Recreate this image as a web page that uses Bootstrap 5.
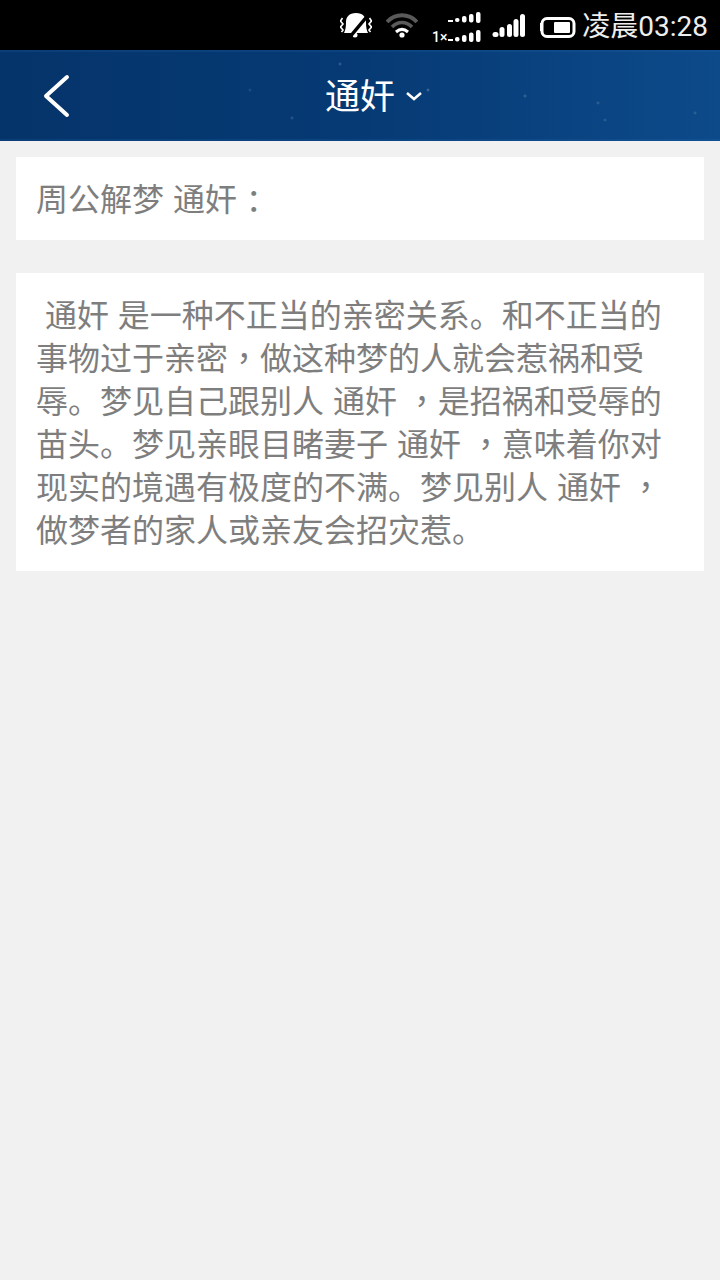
<!DOCTYPE html>
<html lang="zh-CN">
<head>
  <meta charset="UTF-8" />
  <title>通奸</title>
  <meta name="viewport" content="width=device-width, initial-scale=1" />
  <link href="https://cdn.jsdelivr.net/npm/bootstrap@5.3.0/dist/css/bootstrap.min.css" rel="stylesheet" />
  <style>
    body, html {
      margin: 0;
      padding: 0;
      height: 100%;
    }

    body {
      background-color: #f1f1f1;
      font-family: "Liberation Sans", "Noto Sans CJK SC", sans-serif;
    }

    /* Status bar */
    .status-bar {
      height: 50px;
      background-color: #000;
      padding-right: 12px;
    }

    .status-bar svg {
      flex: none;
    }

    .gap-mute { margin-right: 14px; }
    .gap-wifi { margin-right: 14px; }
    .gap-sim { margin-right: 10px; }
    .gap-signal { margin-right: 12px; }

    .status-time {
      color: #eee;
      font-family: Roboto, "Noto Sans CJK SC", sans-serif;
      font-size: 28px;
      line-height: 50px;
      padding-top: 3px;
      margin-left: 6px;
      white-space: nowrap;
    }

    /* Header */
    .title-bar {
      height: 91px;
      padding: 2px 0 0 28px;
      background-color: #0a3a70;
      background-image:
        radial-gradient(circle at 340px 14px, rgba(255,255,255,.25) 0, transparent 2px),
        radial-gradient(circle at 250px 40px, rgba(255,255,255,.15) 0, transparent 2px),
        radial-gradient(circle at 292px 68px, rgba(255,255,255,.2) 0, transparent 2px),
        radial-gradient(circle at 428px 40px, rgba(255,255,255,.3) 0, transparent 2px),
        radial-gradient(circle at 525px 46px, rgba(255,255,255,.25) 0, transparent 2px),
        radial-gradient(circle at 598px 53px, rgba(255,255,255,.2) 0, transparent 2px),
        radial-gradient(circle at 605px 70px, rgba(255,255,255,.18) 0, transparent 2px),
        radial-gradient(circle at 695px 63px, rgba(255,255,255,.18) 0, transparent 2px),
        linear-gradient(90deg, #05346a 0%, #063a74 50%, #0d4a8a 100%);
      box-shadow: inset 0 2px 0 rgba(40,110,190,.18), inset 0 -2px 0 rgba(40,110,190,.18);
    }

    .back-btn {
      position: absolute;
      left: 42px;
      top: 24px;
      line-height: 0;
    }

    .title-text {
      color: #fff;
      font-size: 35px;
      line-height: 50px;
    }

    .title-caret {
      margin-left: 10px;
    }

    /* Content */
    .dream-panel {
      background-color: #fff;
      color: #7e7e7e;
      font-size: 32px;
      padding: 0 20px;
      margin: 0 16px;
    }

    .dream-head {
      height: 83px;
      line-height: 86px;
      margin-top: 16px;
      margin-bottom: 33px;
    }

    .dream-body {
      height: 298px;
      padding-top: 22px;
      line-height: 43px;
    }

    /* centred commas, as the phone's fallback font draws them */
    .mid-punct {
      display: inline-block;
      font-family: "Noto Sans CJK TC", sans-serif;
      line-height: 32px;
    }
  </style>
</head>
<body>

  <!-- Status bar -->
  <div class="status-bar d-flex align-items-center justify-content-end">
    <svg class="gap-mute" width="32" height="26" viewBox="0 0 32 26">
      <path d="M16 1C9 1 6 5 6 10 6 15 5.500 18 4 21H28C26.500 18 26 15 26 10 26 5 23 1 16 1Z" fill="#fff"/>
      <circle cx="15" cy="23" r="2.500" fill="#fff"/>
      <path d="M29 2L9 26" stroke="#000" stroke-width="3.500"/>
      <path d="M2.500 6L.5 9 3 12 .5 15 3 18 1.500 20M29.500 6l2 3-2.500 3 2.500 3-2.500 3 1.500 2" stroke="#fff" stroke-width="1.600" fill="none"/>
    </svg>
    <svg class="gap-wifi" width="32" height="26" viewBox="0 0 32 26">
      <path d="M1 10C9 1 23 1 31 10" stroke="#5a5a5a" stroke-width="4" fill="none"/>
      <path d="M6 15C12 9 20 9 26 15" stroke="#5a5a5a" stroke-width="3.500" fill="none"/>
      <path d="M10 20C14 16.500 18 16.500 22 20" stroke="#fff" stroke-width="3" fill="none"/>
      <circle cx="16" cy="23" r="2.600" fill="#fff"/>
    </svg>
    <svg class="gap-sim" width="50" height="40" viewBox="0 0 50 40">
      <g fill="#fff">
        <rect x="16" y="15" width="5" height="2"/><rect x="23" y="13" width="4.500" height="4" rx="2"/>
        <rect x="30" y="11" width="4.500" height="6.500" rx="2"/><rect x="37" y="9" width="4.500" height="8.500" rx="2"/>
        <rect x="44" y="7" width="4.500" height="11" rx="2"/>
        <rect x="16" y="34" width="5" height="2"/><rect x="23" y="32" width="4.500" height="4.500" rx="2"/>
        <rect x="30" y="30" width="4.500" height="7" rx="2"/><rect x="37" y="27.500" width="4.500" height="9.500" rx="2"/>
        <rect x="44" y="25" width="4.500" height="12" rx="2"/>
      </g>
      <text x="0" y="37" fill="#fff" font-size="14" font-weight="500" font-family="Roboto, sans-serif">1×</text>
    </svg>
    <svg class="gap-signal" width="34" height="26" viewBox="0 0 34 26">
      <g fill="#fff">
        <rect x="0.500" y="20" width="6" height="5" rx="2.500"/><rect x="7.500" y="15" width="5" height="10" rx="2.500"/>
        <rect x="15" y="12" width="5" height="13" rx="2.500"/><rect x="21.500" y="7" width="5" height="18" rx="2.500"/>
        <rect x="28" y="2" width="5" height="23" rx="2.500"/>
      </g>
    </svg>
    <svg width="38" height="28" viewBox="0 0 38 28">
      <path d="M2 12h2v8H2z" fill="#fff"/>
      <rect x="4" y="7.500" width="32" height="18" rx="5" fill="none" stroke="#fff" stroke-width="3"/>
      <rect x="16" y="11" width="16" height="11" rx="1" fill="#fff"/>
    </svg>
    <span class="status-time">凌晨03:28</span>
  </div>

  <!-- Header -->
  <nav class="navbar title-bar justify-content-center position-relative">
    <a class="back-btn" href="#">
      <svg width="28" height="44" viewBox="0 0 28 44">
        <path d="M25 3L4 22l21 19" stroke="#fff" stroke-width="4" stroke-linecap="round" stroke-linejoin="round" fill="none"/>
      </svg>
    </a>
    <span class="title-text d-flex align-items-center">
      通奸
      <svg class="title-caret" width="18" height="12" viewBox="0 0 18 12">
        <path d="M2 2l7 6 7-6" stroke="#fff" stroke-width="2.500" fill="none"/>
      </svg>
    </span>
  </nav>

  <!-- Dream text -->
  <div class="dream-panel dream-head">周公解梦 通奸 ：</div>
  <div class="dream-panel dream-body">
    &nbsp;通奸 是一种不正当的亲密关系。和不正当的事物过于亲密<span class="mid-punct" lang="zh-TW">，</span>做这种梦的人就会惹祸和受辱。梦见自己跟别人 通奸 <span class="mid-punct" lang="zh-TW">，</span>是招祸和受辱的苗头。梦见亲眼目睹妻子 通奸 <span class="mid-punct" lang="zh-TW">，</span>意味着你对现实的境遇有极度的不满。梦见别人 通奸 <span class="mid-punct" lang="zh-TW">，</span>做梦者的家人或亲友会招灾惹。
  </div>

  <script src="https://cdn.jsdelivr.net/npm/bootstrap@5.3.0/dist/js/bootstrap.bundle.min.js"></script>
</body>
</html>
